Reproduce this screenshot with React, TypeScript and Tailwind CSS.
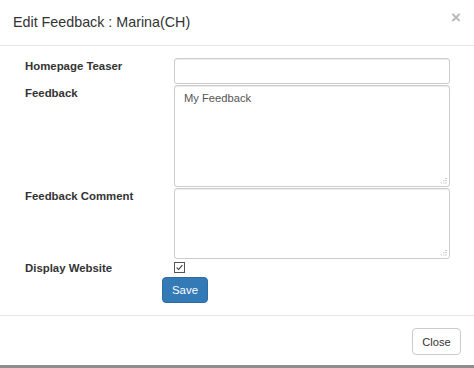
import React from "react";

const fieldCls =
  "block w-[276px] rounded-[3px] border border-[#cccccc] bg-white shadow-[inset_0_1px_1px_rgba(0,0,0,0.075)] px-[9px] pt-[4px] text-[11.2px] leading-[16px] text-[#555555] outline-none resize-none";

function Label({ children }: { children: React.ReactNode }) {
  return (
    <div className="text-[11.4px] leading-[16px] font-bold text-[#333333]">{children}</div>
  );
}

function Grip() {
  return (
    <svg viewBox="0 0 6 6" className="absolute right-[3px] bottom-[3px] w-[6px] h-[6px]">
      <rect x="4.5" y="0" width="1" height="1" fill="#9a9a9a" />
      <rect x="4.5" y="2.2" width="1" height="1" fill="#9a9a9a" />
      <rect x="2.3" y="2.2" width="1" height="1" fill="#b0b0b0" />
      <rect x="4.5" y="4.5" width="1" height="1" fill="#9a9a9a" />
      <rect x="2.3" y="4.5" width="1" height="1" fill="#b0b0b0" />
      <rect x="0" y="4.5" width="1" height="1" fill="#c4c4c4" />
    </svg>
  );
}

export default function App() {
  return (
    <div className="w-[474px] h-[368px] bg-white flex flex-col font-['Liberation_Sans',Arial,sans-serif] text-[#333333]">
      {/* Header */}
      <div className="h-[46px] border-b border-[#e5e5e5] px-[13px] flex items-start">
        <div className="pt-[12px] text-[14.3px] leading-[20px] text-[#333333]">
          Edit Feedback : Marina(CH)
        </div>
        <div className="ml-auto mt-[8px] text-[17px] leading-[20px] font-bold text-[#b8b8b8]">
          ×
        </div>
      </div>

      {/* Body */}
      <div className="pt-[12px] pl-[25px]">
        <div className="grid grid-cols-[149px_276px]">
          <Label>Homepage Teaser</Label>
          <input type="text" className={fieldCls + " h-[26px] pt-0"} />
        </div>
        <div className="grid grid-cols-[149px_276px] mt-[1px]">
          <Label>Feedback</Label>
          <div className="relative">
            <textarea className={fieldCls + " h-[102px]"} defaultValue="My Feedback" />
            <Grip />
          </div>
        </div>
        <div className="grid grid-cols-[149px_276px] mt-[1px]">
          <Label>Feedback Comment</Label>
          <div className="relative">
            <textarea className={fieldCls + " h-[71px]"} />
            <Grip />
          </div>
        </div>
        <div className="grid grid-cols-[149px_276px] mt-[1px]">
          <Label>Display Website</Label>
          <div className="pt-[2px]">
            <div className="w-[11px] h-[11px] border border-[#555555] bg-white flex items-center justify-center">
              <svg viewBox="0 0 11 11" className="w-[11px] h-[11px]">
                <path d="M2 5.5 L4.3 8 L9 2.5" fill="none" stroke="#333333" strokeWidth="1.3" />
              </svg>
            </div>
          </div>
        </div>
        <div className="mt-[1px] ml-[137px]">
          <button className="w-[46px] h-[26px] rounded-[4px] bg-[#337ab7] border border-[#2e6da4] text-white text-[11.4px] leading-[16px]">
            Save
          </button>
        </div>
      </div>

      {/* Footer */}
      <div className="mt-[12px] border-t border-[#e5e5e5] flex-1 flex justify-end items-start pr-[13px] pt-[12px]">
        <button className="w-[49px] h-[27px] rounded-[4px] border border-[#cccccc] bg-white text-[11.1px] leading-[16px] text-[#333333]">
          Close
        </button>
      </div>
      <div className="h-[3px] bg-[#8e8e8e]" />
    </div>
  );
}
